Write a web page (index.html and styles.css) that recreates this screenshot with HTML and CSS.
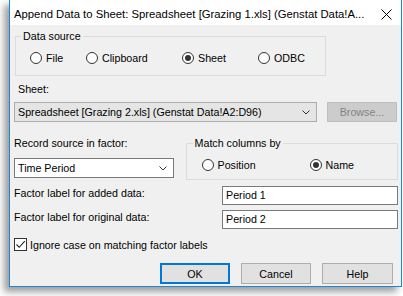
FILE: index.html
```html
<!DOCTYPE html>
<html>
<head>
<meta charset="utf-8">
<link rel="stylesheet" href="styles.css">
</head>
<body>
<div class="win">
  <div class="titlebar">
    <span class="title">Append Data to Sheet: Spreadsheet [Grazing 1.xls] (Genstat Data!A...</span>
    <svg class="close" width="11" height="11" viewBox="0 0 11 11"><path d="M0.5 0.5 L10.5 10.5 M10.5 0.5 L0.5 10.5" stroke="#000" stroke-width="1"/></svg>
  </div>
  <div class="content">
    <fieldset class="group g1">
      <legend>Data source</legend>
      <div class="radios r1">
        <div class="radio"><span class="circle"></span>File</div>
        <div class="radio"><span class="circle"></span>Clipboard</div>
        <div class="radio"><span class="circle on"></span>Sheet</div>
        <div class="radio"><span class="circle"></span>ODBC</div>
      </div>
    </fieldset>
    <div class="lbl sheet-lbl">Sheet:</div>
    <div class="combo-row">
      <div class="combo list wide"><span>Spreadsheet [Grazing 2.xls] (Genstat Data!A2:D96)</span><svg class="chev" width="8" height="5" viewBox="0 0 8 5"><path d="M0.5 0.5 L4 4 L7.5 0.5" fill="none" stroke="#333" stroke-width="1"/></svg></div>
      <div class="btn disabled browse">Browse...</div>
    </div>
    <div class="mid">
      <div class="leftcol">
        <div class="lbl">Record source in factor:</div>
        <div class="combo edit narrow"><span>Time Period</span><svg class="chev" width="8" height="5" viewBox="0 0 8 5"><path d="M0.5 0.5 L4 4 L7.5 0.5" fill="none" stroke="#333" stroke-width="1"/></svg></div>
      </div>
      <fieldset class="group g2">
        <legend>Match columns by</legend>
        <div class="radios r2">
          <div class="radio"><span class="circle"></span>Position</div>
          <div class="radio"><span class="circle on"></span>Name</div>
        </div>
      </fieldset>
    </div>
    <div class="field first">
      <div class="lbl">Factor label for added data:</div>
      <div class="textbox">Period 1</div>
    </div>
    <div class="field second">
      <div class="lbl">Factor label for original data:</div>
      <div class="textbox">Period 2</div>
    </div>
    <div class="check">
      <span class="box"><svg width="11" height="11" viewBox="0 0 11 11"><path d="M1.5 5.5 L4.2 8.3 L9.8 2.2" fill="none" stroke="#222" stroke-width="1.1"/></svg></span>
      Ignore case on matching factor labels
    </div>
    <div class="buttons">
      <div class="btn default">OK</div>
      <div class="btn">Cancel</div>
      <div class="btn help">Help</div>
    </div>
  </div>
</div>
</body>
</html>
```
FILE: styles.css
```css
html, body {
  margin: 0;
  padding: 0;
  background: #ffffff;
}
body {
  width: 403px;
  height: 296px;
  overflow: hidden;
  font-family: "Liberation Sans", Arial, sans-serif;
  font-size: 10.7px;
  color: #000;
}
.win {
  margin-left: 9px;
  width: 393px;
  height: 287px;
  box-sizing: border-box;
  border: 1px solid #1e86d8;
  border-top: none;
  background: #f0f0f0;
  box-shadow: -5px 5px 7px rgba(0, 0, 0, 0.38);
  display: flex;
  flex-direction: column;
}
.titlebar {
  height: 25px;
  background: #fff;
  display: flex;
  align-items: center;
  padding-left: 4px;
  padding-top: 3px;
  box-sizing: border-box;
}
.title {
  font-size: 11.3px;
  flex: 1;
  white-space: nowrap;
}
.close {
  margin-right: 9px;
}
.content {
  padding: 0 3px 0 4px;
  display: flex;
  flex-direction: column;
}
.lbl {
  line-height: 14px;
  white-space: nowrap;
}
fieldset.group {
  margin: 0;
  border: 1px solid #dcdcdc;
  min-width: 0;
}
fieldset.group legend {
  line-height: 14px;
  padding: 0 2px;
}
.g1 {
  margin: 4px 0 0 1px !important;
  width: 311px;
  box-sizing: border-box;
  padding: 8px 0 10px 0;
}
.g1 legend {
  margin-left: 5px;
}
.radios {
  display: grid;
  line-height: 14px;
}
.r1 {
  grid-template-columns: 56px 96px 76px auto;
  margin-left: 14px;
}
.r2 {
  grid-template-columns: 108px auto;
  margin-left: 15px;
}
.radio {
  display: flex;
  align-items: center;
  white-space: nowrap;
}
.circle {
  width: 12px;
  height: 12px;
  box-sizing: border-box;
  border: 1px solid #333;
  border-radius: 50%;
  background: #fff;
  margin-right: 4px;
  display: flex;
  align-items: center;
  justify-content: center;
}
.circle.on::after {
  content: "";
  width: 6px;
  height: 6px;
  border-radius: 50%;
  background: #333;
}
.sheet-lbl {
  margin: 6px 0 0 4px;
}
.combo-row {
  display: flex;
  margin-top: 6px;
  height: 20px;
}
.combo {
  box-sizing: border-box;
  height: 20px;
  display: flex;
  align-items: center;
  padding-left: 3px;
  padding-right: 6px;
  white-space: nowrap;
}
.combo span {
  flex: 1;
}
.combo.list {
  background: #e5e5e5;
  border: 1px solid #adadad;
}
.combo.edit {
  background: #fff;
  border: 1px solid #7a7a7a;
}
.wide {
  width: 303px;
}
.narrow {
  width: 160px;
  margin-top: 8px;
}
.btn {
  box-sizing: border-box;
  width: 70px;
  height: 21px;
  background: #e1e1e1;
  border: 1px solid #adadad;
  display: flex;
  align-items: center;
  justify-content: center;
}
.btn.disabled {
  background: #cccccc;
  border-color: #bfbfbf;
  color: #838383;
}
.browse {
  margin-left: 10px;
  height: 20px;
}
.btn.default {
  border: 2px solid #0078d7;
}
.mid {
  display: flex;
  margin-top: 14px;
}
.leftcol {
  width: 172px;
  display: flex;
  flex-direction: column;
}
.g2 {
  width: 213px;
  box-sizing: border-box;
  padding: 8px 0 7px 0;
}
.g2 legend {
  margin-left: 6px;
}
.field {
  display: flex;
  justify-content: space-between;
  align-items: flex-start;
  height: 19px;
}
.field.first {
  margin-top: 6px;
}
.field.second {
  margin-top: 5px;
}
.textbox {
  box-sizing: border-box;
  width: 176px;
  height: 19px;
  background: #fff;
  border: 1px solid #7a7a7a;
  line-height: 17px;
  padding-left: 3px;
}
.check {
  display: flex;
  align-items: center;
  margin-top: 9px;
  height: 13px;
  line-height: 14px;
}
.box {
  box-sizing: border-box;
  width: 13px;
  height: 13px;
  border: 1px solid #333;
  background: #fff;
  margin-right: 3px;
  display: flex;
}
.buttons {
  display: flex;
  justify-content: flex-end;
  gap: 11px;
  margin-top: 12px;
  margin-right: 5px;
}
.help {
  width: 71px;
}
```
